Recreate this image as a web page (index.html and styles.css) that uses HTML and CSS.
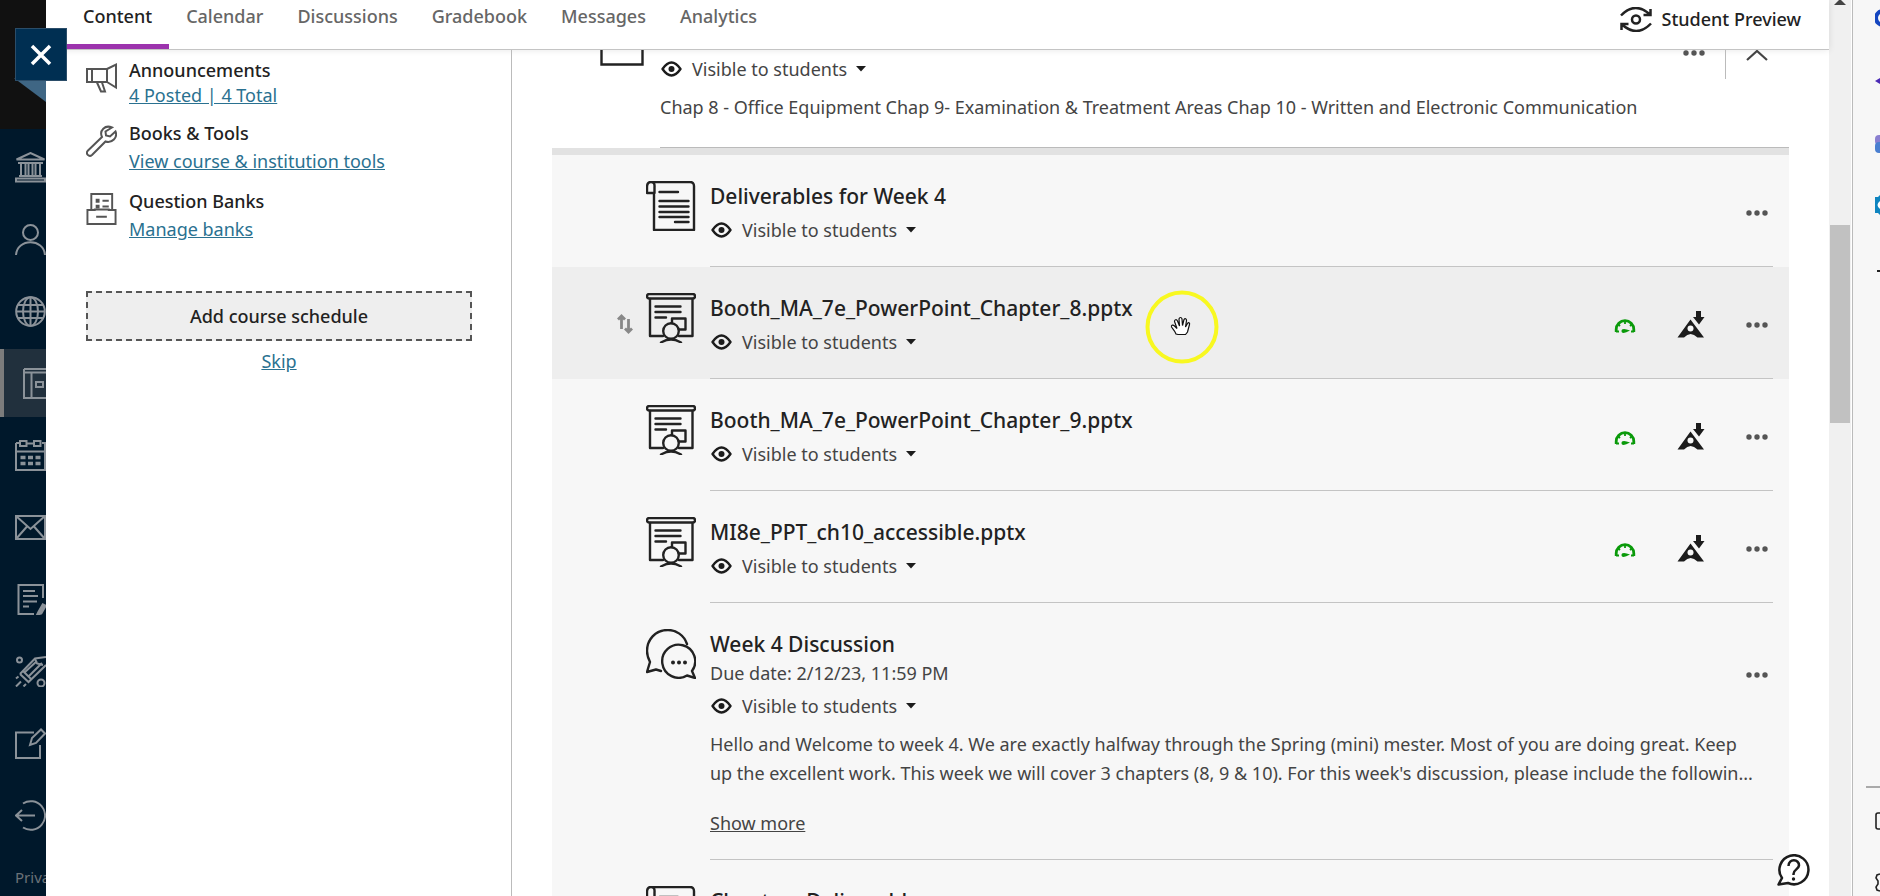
FILE: index.html
```
<!DOCTYPE html>
<html lang="en">
<head>
  <meta charset="UTF-8" />
  <title>Course Content</title>
  <link rel="stylesheet" href="styles.css">
</head>
<body>

<!-- Shared icons -->
<svg class="sprite" aria-hidden="true">
  <symbol id="eye" viewBox="0 0 21 16">
    <path d="M1.5 8C5 3 7.5 1.5 10.500 1.5S16 3 19.500 8C16 13 13.500 14.500 10.500 14.500S5 13 1.500 8z" fill="none" stroke="#1c1c1c" stroke-width="2.400" stroke-linejoin="round"/>
    <circle cx="10.500" cy="8" r="3" fill="#1c1c1c"/>
  </symbol>
  <symbol id="caret" viewBox="0 0 10 6"><path d="M0 0h10L5 5.500z" fill="#1c1c1c"/></symbol>
  <symbol id="dots" viewBox="0 0 22 6"><g fill="#555"><circle cx="3" cy="3" r="2.700"/><circle cx="11" cy="3" r="2.700"/><circle cx="19" cy="3" r="2.700"/></g></symbol>
  <symbol id="doc" viewBox="0 0 50 50">
    <g fill="none" stroke="#222" stroke-width="2.400" stroke-linejoin="round" stroke-linecap="round">
      <path d="M8 12V49h40V5q0-4-4-4H5Q1 1 1 6v6h7M5 1q4 0 3.500 5V12"/>
      <path d="M13.500 11H32M13.500 20H42.500M13.500 25.500H42.500M13.500 31H42.500M13.500 36H42.500M29 41H42.500"/>
    </g>
  </symbol>
  <symbol id="ppt" viewBox="0 0 50 50">
    <g fill="none" stroke="#222" stroke-width="2.400" stroke-linejoin="round" stroke-linecap="round">
      <rect x="1" y="1" width="48" height="4.500" rx="2.200"/>
      <path d="M4 6V43H17M33 43H46.500V6"/>
      <path d="M9.500 13.500H34.500M9.500 19H34.500M9.500 24.500H20"/>
      <path d="M26 30V25.500H39.500V36.500H33"/>
      <circle cx="25" cy="38" r="7.800"/>
      <path d="M15 49.500q10-6 20 0"/>
    </g>
  </symbol>
  <symbol id="gauge" viewBox="0 -3 22 18">
    <path d="M2.200 13V10.500a8.800 8.800 0 0 1 17.600 0V13" fill="none" stroke="#0a9a0a" stroke-width="2.800"/>
    <path d="M11 2v3M4.500 5.500l1.500 1.500M17.500 5.500l-1.500 1.500M2 12.500h3M20 12.500h-3" stroke="#0a9a0a" stroke-width="1.800"/>
    <path d="M8 10.500q2-1.500 8 1-6 3.500-8 2-1.200-1.300 0-3z" fill="#0a9a0a"/>
  </symbol>
  <symbol id="ally" viewBox="0 0 28 27">
    <path d="M13.500 8.500L27 26.500H20.500Q13.500 19.500 7 26.500H.5z" fill="#1c1c1c"/>
    <circle cx="13.500" cy="17.500" r="3" fill="#f7f7f7"/>
    <path d="M19 0h5v6h3.500L22 13.500 16 6h3z" fill="#1c1c1c"/>
  </symbol>
</svg>

<div class="app">

  <!-- Main menu, dimmed behind the course panel -->
  <nav class="menu">
    <div class="logo">
      <svg width="46" height="102" viewBox="0 0 46 102"><path d="M14 78H46V102z" fill="#3f6684"/></svg>
    </div>
    <a href="#" class="menu-item"><svg class="menu-icon" viewBox="0 0 31 31"><path d="M1.500 7.500L15.500 1l14 6.500zM3 11h25M6 11v12M10.500 11v12M13.500 11v12M17.500 11v12M20.500 11v12M25 11v12M4 24h23M1 29.500V26.500H30v3z"/></svg></a>
    <a href="#" class="menu-item"><svg class="menu-icon" viewBox="0 0 31 31"><circle cx="15.500" cy="8.500" r="7.500"/><path d="M1 31C2 14 29 14 30 31"/></svg></a>
    <a href="#" class="menu-item"><svg class="menu-icon" viewBox="0 0 31 31"><circle cx="15.500" cy="15.500" r="14.300"/><ellipse cx="15.500" cy="15.500" rx="7.500" ry="14.300"/><path d="M15.500 1v29M2.500 9h26M1 15.500h29M2.500 22h26"/></svg></a>
    <a href="#" class="menu-item active"><svg class="menu-icon" viewBox="0 0 31 31"><path d="M1 1H31M1 4.500H31M1 1V30H31M8.500 5V30M13 14h7v5h-7z"/></svg></a>
    <a href="#" class="menu-item"><svg class="menu-icon" viewBox="0 0 31 31"><path d="M1 3h3.500M1 3V30H30V3H27M12.500 3.500h6M1 11.500H30M5 1h6.500v5H5zM19 1h6.500v5H19z"/><path d="M5.500 17.500h5M13 17.500h5M20.500 17.500h5M5.500 23.500h5M13 23.500h5M20.500 23.500h5" stroke-width="3.500"/></svg></a>
    <a href="#" class="menu-item"><svg class="menu-icon" viewBox="0 0 31 31"><path d="M1 4H30V27H1zM1 4L15.500 17 30 4M1 27L12 14.500M30 27L19 14.500"/></svg></a>
    <a href="#" class="menu-item"><svg class="menu-icon" viewBox="0 0 31 31"><path d="M19 30H3.500V1H28V14M8 7H20M8 12H23M8 17.500H22M8 22.500H14"/><path d="M24 28l-1 2 3-1 4-7-2-1z" stroke-width="3"/></svg></a>
    <a href="#" class="menu-item"><svg class="menu-icon" viewBox="0 0 31 31"><path d="M5 18L20 2.500 31 1M5 18l8.500 8L31 9M10 16L22 5M13 21L27 7M20 2.500l2 5 6 1.500M8 15l8 8M1 22.500l2.500-2M1 30.500l5-5M8.500 30.500l2.500-2.500"/><circle cx="26" cy="27" r="3.500"/><circle cx="4.500" cy="4" r="2.500"/></svg></a>
    <a href="#" class="menu-item"><svg class="menu-icon" viewBox="0 0 31 31"><path d="M19 4.500H1V30H25V17M15 17l2-7L26 1.500l4 4L21 15z"/></svg></a>
    <a href="#" class="menu-item"><svg class="menu-icon" viewBox="0 0 31 31"><path d="M8 3.500a14.300 14.300 0 1 1 0 24M1 15.500H20M7 10l-6 5.500L7 21"/></svg></a>
    <a href="#" class="privacy">Privacy</a>
  </nav>

  <button class="close" aria-label="Close">
    <svg width="22" height="22" viewBox="0 0 22 22"><path d="M2 2l18 18M20 2L2 20" stroke="#fff" stroke-width="3.500"/></svg>
  </button>

  <div class="course">
    <!-- Tabs -->
    <header class="topbar">
      <nav class="tabs">
        <a href="#" class="tab current">Content</a>
        <a href="#" class="tab">Calendar</a>
        <a href="#" class="tab">Discussions</a>
        <a href="#" class="tab">Gradebook</a>
        <a href="#" class="tab">Messages</a>
        <a href="#" class="tab">Analytics</a>
      </nav>
      <button class="preview">
        <svg width="32" height="25" viewBox="0 0 32 25"><g fill="none" stroke="#222" stroke-width="2.500"><path d="M1 8.500Q15-6 30 7.500M30.500 2v6h-7M31 16.500Q17 31 2 17.500M1.500 23v-6h7"/><circle cx="16" cy="12.500" r="4"/></g></svg>
        Student Preview
      </button>
    </header>

    <div class="columns">
      <!-- Details & Actions -->
      <aside class="details">
        <div class="tool counts">
          <svg class="tool-icon" viewBox="0 0 31 31"><path d="M1 6.500h5v13H1zM6 6.500H21v13H6M21 6.500L30 2v23l-9-5.500M11 20l4 9h4l-3-9"/></svg>
          <div>
            <h3>Announcements</h3>
            <a href="#">4 Posted | 4 Total</a>
          </div>
        </div>
        <div class="tool">
          <svg class="tool-icon" viewBox="0 0 31 31"><path d="M26 2c-7-3-13 3-10 9.500L2 25c-3 3 1 7 4 4.500L19.500 16C26 18 32 12 29.500 6L24 11l-4-1-.500-4z"/></svg>
          <div>
            <h3>Books &amp; Tools</h3>
            <a href="#">View course &amp; institution tools</a>
          </div>
        </div>
        <div class="tool">
          <svg class="tool-icon" viewBox="0 0 31 33"><path d="M5 17V1H26.500V17M1 17.500H8.500V17H23v.500H30V32H1zM10 24.500h11M16.500 8H23M16.500 14H23"/><path d="M9.500 8h4M9.500 14h4" stroke-width="4"/></svg>
          <div>
            <h3>Question Banks</h3>
            <a href="#">Manage banks</a>
          </div>
        </div>
        <button class="schedule">Add course schedule</button>
        <a href="#" class="skip">Skip</a>
      </aside>

      <main class="content">
        <!-- Open module -->
        <section class="module">
          <svg class="folder" width="44" height="16" viewBox="0 0 44 16"><path d="M1.500 0V14.500H42.500V0" fill="none" stroke="#222" stroke-width="2.400"/></svg>
          <div class="module-body">
            <div class="module-head">
              <button class="visibility"><svg class="eye"><use href="#eye"/></svg>Visible to students<svg class="caret"><use href="#caret"/></svg></button>
              <div class="module-actions">
                <button class="more" aria-label="More options"><svg><use href="#dots"/></svg></button>
                <span class="divider"></span>
                <button class="collapse" aria-label="Collapse"><svg width="22" height="11" viewBox="0 0 22 11"><path d="M1 10L11 1l10 9" fill="none" stroke="#444" stroke-width="2.200"/></svg></button>
              </div>
            </div>
            <p class="desc">Chap 8 - Office Equipment Chap 9- Examination &amp; Treatment Areas Chap 10 - Written and Electronic Communication</p>
          </div>
        </section>

        <ul class="items">
          <li class="item">
            <div class="drag"></div>
            <svg class="item-icon"><use href="#doc"/></svg>
            <div class="item-body">
              <div class="item-head">
                <div>
                  <h2>Deliverables for Week 4</h2>
                  <button class="visibility"><svg class="eye"><use href="#eye"/></svg>Visible to students<svg class="caret"><use href="#caret"/></svg></button>
                </div>
                <div class="actions">
                  <button class="more" aria-label="More options"><svg><use href="#dots"/></svg></button>
                </div>
              </div>
            </div>
          </li>

          <li class="item hovered">
            <div class="drag">
              <svg width="16" height="20" viewBox="0 0 16 20"><path d="M4.500 15V3M1 5.500L4.500 2 8 5.500M11.500 5v12M8 14.500l3.500 3.500 3.500-3.500" fill="none" stroke="#888" stroke-width="2.800"/></svg>
            </div>
            <svg class="item-icon"><use href="#ppt"/></svg>
            <div class="item-body">
              <div class="item-head">
                <div>
                  <h2>Booth_MA_7e_PowerPoint_Chapter_8.pptx</h2>
                  <button class="visibility"><svg class="eye"><use href="#eye"/></svg>Visible to students<svg class="caret"><use href="#caret"/></svg></button>
                </div>
                <div class="actions">
                  <button class="score" aria-label="Accessibility score"><svg><use href="#gauge"/></svg></button>
                  <button class="formats" aria-label="Alternative formats"><svg><use href="#ally"/></svg></button>
                  <button class="more" aria-label="More options"><svg><use href="#dots"/></svg></button>
                </div>
              </div>
            </div>
            <!-- Grab pointer -->
            <svg class="pointer" viewBox="0 0 74 74">
              <circle cx="37" cy="37" r="34.500" fill="none" stroke="#f8f820" stroke-width="4"/>
              <path d="M31 44c-1-3-3-5-4.500-7-.5-2 1.500-2.500 3-1l2.500 2.500-2.500-7c0-2 2-2.500 3-.5l2 5-.5-7c.5-2 2.500-2 3 0l.5 6.500 1.500-6c1-1.500 2.500-1 2.500 1l-1 6.500 2-3.500c1-1.500 2.500-.5 2 1l-2 7.500-2 2.500H33z" fill="#fff" stroke="#111" stroke-width="1.200"/>
            </svg>
          </li>

          <li class="item">
            <div class="drag"></div>
            <svg class="item-icon"><use href="#ppt"/></svg>
            <div class="item-body">
              <div class="item-head">
                <div>
                  <h2>Booth_MA_7e_PowerPoint_Chapter_9.pptx</h2>
                  <button class="visibility"><svg class="eye"><use href="#eye"/></svg>Visible to students<svg class="caret"><use href="#caret"/></svg></button>
                </div>
                <div class="actions">
                  <button class="score" aria-label="Accessibility score"><svg><use href="#gauge"/></svg></button>
                  <button class="formats" aria-label="Alternative formats"><svg><use href="#ally"/></svg></button>
                  <button class="more" aria-label="More options"><svg><use href="#dots"/></svg></button>
                </div>
              </div>
            </div>
          </li>

          <li class="item">
            <div class="drag"></div>
            <svg class="item-icon"><use href="#ppt"/></svg>
            <div class="item-body">
              <div class="item-head">
                <div>
                  <h2>MI8e_PPT_ch10_accessible.pptx</h2>
                  <button class="visibility"><svg class="eye"><use href="#eye"/></svg>Visible to students<svg class="caret"><use href="#caret"/></svg></button>
                </div>
                <div class="actions">
                  <button class="score" aria-label="Accessibility score"><svg><use href="#gauge"/></svg></button>
                  <button class="formats" aria-label="Alternative formats"><svg><use href="#ally"/></svg></button>
                  <button class="more" aria-label="More options"><svg><use href="#dots"/></svg></button>
                </div>
              </div>
            </div>
          </li>

          <li class="item">
            <div class="drag"></div>
            <svg class="item-icon" viewBox="0 0 50 50">
              <g fill="none" stroke="#222" stroke-width="2.400" stroke-linejoin="round" stroke-linecap="round">
                <path d="M41 15C38 6 30 1 22 1 9 1 1 11 1 22c0 5 1.500 8 3 11L1 43l9-2.500L15 42"/>
                <path d="M46 42a16.500 16.500 0 1 0-5 4.500L49 49z"/>
              </g>
              <g fill="#222"><circle cx="27" cy="33.500" r="2"/><circle cx="33" cy="33.500" r="2"/><circle cx="39" cy="33.500" r="2"/></g>
            </svg>
            <div class="item-body">
              <div class="item-head">
                <div>
                  <h2>Week 4 Discussion</h2>
                  <div class="due">Due date: 2/12/23, 11:59 PM</div>
                  <button class="visibility"><svg class="eye"><use href="#eye"/></svg>Visible to students<svg class="caret"><use href="#caret"/></svg></button>
                </div>
                <div class="actions">
                  <button class="more" aria-label="More options"><svg><use href="#dots"/></svg></button>
                </div>
              </div>
              <p class="desc">Hello and Welcome to week 4. We are exactly halfway through the Spring (mini) mester. Most of you are doing great. Keep<br>
              up the excellent work. This week we will cover 3 chapters (8, 9 &amp; 10). For this week's discussion, please include the followin...</p>
              <button class="show-more">Show more</button>
            </div>
          </li>

          <li class="item">
            <div class="drag"></div>
            <svg class="item-icon"><use href="#doc"/></svg>
            <div class="item-body">
              <div class="item-head"><h2>Chapters Deliverables</h2></div>
            </div>
          </li>
        </ul>
      </main>
    </div>

    <button class="help" aria-label="Help">
      <svg width="33" height="32" viewBox="0 0 33 32"><path d="M5 24A14.500 14.500 0 1 1 11 29L1.500 30.500z" fill="#fff" stroke="#1c1c1c" stroke-width="2.500" stroke-linejoin="round"/><path d="M11.500 12c0-8 11-7 10.500-.500-.500 4-5.500 4-5.500 8.500v1" fill="none" stroke="#1c1c1c" stroke-width="2.500"/><circle cx="16.500" cy="25" r="1.700" fill="#1c1c1c"/></svg>
    </button>
  </div>

  <!-- Scrollbar -->
  <div class="scrollbar">
    <svg width="12" height="6" viewBox="0 0 12 6"><path d="M0 5L6-1l6 6z" fill="#444"/></svg>
    <div class="thumb"></div>
  </div>

  <!-- Browser side strip -->
  <div class="strip">
    <svg class="strip-apps" width="5" height="290" viewBox="0 0 5 290">
      <path d="M8 11A7 7 0 0 0 8 25" fill="none" stroke="#1546c0" stroke-width="4"/>
      <path d="M0 81l5-3v6z" fill="#4a2ab5"/>
      <rect y="135" width="16" height="10" rx="4" fill="#8a7fd0"/>
      <rect y="142" width="16" height="11" rx="4" fill="#4a7fd0"/>
      <path d="M0 197h3l2-2v20l-2-2H0z" fill="#0f85c0"/>
      <path d="M5 201q-5 4 0 8z" fill="#fff"/>
      <path d="M2 271h3" stroke="#222" stroke-width="2"/>
    </svg>
    <svg class="strip-tools" width="14" height="110" viewBox="0 0 14 110">
      <path d="M0 1H14" stroke="#aaa" stroke-width="2"/>
      <path d="M14 27h-2q-2 0-2 2v12q0 2 2 2h2" fill="none" stroke="#222" stroke-width="1.600"/>
      <path d="M14 88l-3 1-1 3 2 3v3l-2 3 1 3 3 1" fill="none" stroke="#222" stroke-width="1.600"/>
    </svg>
  </div>
</div>

</body>
</html>
```
FILE: styles.css
```
* {
  box-sizing: border-box;
}

body {
  margin: 0;
  background: #fff;
  color: #444;
  font-family: "Noto Sans", "Open Sans", sans-serif;
  font-size: 18px;
  line-height: 28px;
  overflow: hidden;
}

h2, h3, p, ul {
  margin: 0;
  padding: 0;
}

button {
  margin: 0;
  padding: 0;
  border: none;
  background: none;
  color: inherit;
  font: inherit;
  cursor: pointer;
}

svg {
  display: block;
  flex: none;
}

.sprite {
  position: absolute;
  width: 0;
  height: 0;
}

.app {
  position: relative;
  display: flex;
  height: 100vh;
}

/* Main menu */
.menu {
  width: 46px;
  flex: none;
  overflow: hidden;
  background: #00182b;
}

.logo {
  height: 129px;
  background: #111;
}

.menu-item {
  display: flex;
  align-items: center;
  width: 77px;
  height: 68px;
  margin: 4px 0;
  padding-left: 15px;
}

.menu-item.active {
  padding-left: 19px;
  border-left: 4px solid #7c7c7c;
  background: #21303d;
}

.menu-icon {
  width: 31px;
  height: 31px;
  fill: none;
  stroke: #8b9299;
  stroke-width: 2;
}

.privacy {
  display: block;
  margin-top: 14px;
  padding-left: 15px;
  color: #6b7278;
  font-size: 15px;
  text-decoration: none;
}

.close {
  position: absolute;
  top: 28px;
  left: 15px;
  z-index: 3;
  display: flex;
  align-items: center;
  justify-content: center;
  width: 52px;
  height: 53px;
  border: 1px solid #2b4d69;
  background: #002f52;
}

/* Course panel */
.course {
  position: relative;
  display: flex;
  flex: 1;
  flex-direction: column;
  min-width: 0;
}

.topbar {
  display: flex;
  flex: none;
  justify-content: space-between;
  height: 50px;
  padding: 0 28px 0 20px;
  border-bottom: 1px solid #c4c4c4;
  box-shadow: 0 0 7px rgba(0, 0, 0, 0.1);
}

.tabs {
  display: flex;
}

.tab {
  height: 49px;
  padding: 2px 17px 0;
  color: #666;
  font-weight: 500;
  text-decoration: none;
}

.tab.current {
  border-bottom: 5px solid #9c33ad;
  color: #222;
}

.preview {
  display: flex;
  align-items: center;
  gap: 10px;
  height: 38px;
  color: #222;
  font-weight: 500;
}

.columns {
  display: flex;
  flex: 1;
  min-height: 0;
}

/* Details & actions */
.details {
  flex: none;
  width: 466px;
  padding: 6px 39px 0 40px;
  border-right: 1px solid #bbb;
}

.tool {
  display: flex;
  gap: 12px;
  margin-bottom: 12px;
}

.tool h3 {
  color: #222;
  font-size: 18px;
  font-weight: 500;
  line-height: 28px;
}

.tool-icon {
  width: 31px;
  height: 32px;
  margin-top: 6px;
  fill: none;
  stroke: #555;
  stroke-width: 2;
}

.counts {
  line-height: 23px;
}

.details a {
  color: #2a7190;
}

.schedule {
  width: 100%;
  height: 50px;
  margin-top: 36px;
  border: 2px dashed #555;
  background: #eee;
  color: #222;
  font-weight: 500;
}

.skip {
  display: block;
  margin-top: 6px;
  text-align: center;
}

/* Course content */
.content {
  flex: 1;
  min-width: 0;
  padding: 0 40px;
  overflow: hidden;
}

.module {
  display: flex;
  gap: 16px;
  padding-left: 48px;
}

.module-body {
  flex: 1;
  border-bottom: 1px solid #bbb;
}

.module-head {
  display: flex;
  justify-content: space-between;
}

.module-actions {
  display: flex;
  align-items: flex-start;
  padding-right: 21px;
}

.divider {
  width: 1px;
  height: 29px;
  margin: 0 20px;
  background: #bbb;
}

.visibility {
  display: flex;
  align-items: center;
  height: 28px;
  margin-top: 5px;
}

.eye {
  width: 21px;
  height: 16px;
  margin: 0 10px 0 1px;
}

.caret {
  width: 10px;
  height: 6px;
  margin-left: 9px;
}

.more svg {
  width: 22px;
  height: 6px;
}

.desc {
  margin-top: 10px;
  line-height: 29px;
}

.module .desc {
  margin-bottom: 25px;
}

.items {
  border-top: 7px solid #e2e2e2;
  background: #f7f7f7;
  list-style: none;
}

.item {
  position: relative;
  display: flex;
  gap: 14px;
  padding: 0 16px 0 65px;
}

.item.hovered {
  background: #eee;
}

.drag {
  flex: none;
  width: 15px;
  padding-top: 47px;
}

.item-icon {
  width: 50px;
  height: 50px;
  margin-top: 26px;
}

.item-body {
  flex: 1;
  min-width: 0;
  padding: 26px 0 22px;
  border-bottom: 1px solid #c4c4c4;
}

.item h2 {
  color: #222;
  font-size: 21px;
  font-weight: 500;
  line-height: 30px;
}

.item-head {
  display: flex;
  align-items: center;
  justify-content: space-between;
}

.actions {
  display: flex;
  align-items: center;
  gap: 41px;
  padding-right: 5px;
}

.score svg {
  width: 22px;
  height: 18px;
}

.formats svg {
  width: 28px;
  height: 27px;
}

.show-more {
  display: block;
  margin-top: 21px;
  text-decoration: underline;
}

.pointer {
  position: absolute;
  top: 23px;
  left: 593px;
  width: 74px;
  height: 74px;
  pointer-events: none;
}

.help {
  position: absolute;
  right: 19px;
  bottom: 10px;
}

/* Scrollbar and browser strip */
.scrollbar {
  display: flex;
  flex: none;
  flex-direction: column;
  align-items: center;
  width: 23px;
  border-right: 1px solid #fff;
  background: #f0f0f0;
}

.thumb {
  width: 20px;
  height: 198px;
  margin-top: 219px;
  background: #c1c1c1;
}

.strip {
  display: flex;
  flex: none;
  flex-direction: column;
  align-items: flex-end;
  justify-content: space-between;
  width: 28px;
  border-left: 1px solid #bbb;
  background: #f7f7f7;
  overflow: hidden;
}
```
